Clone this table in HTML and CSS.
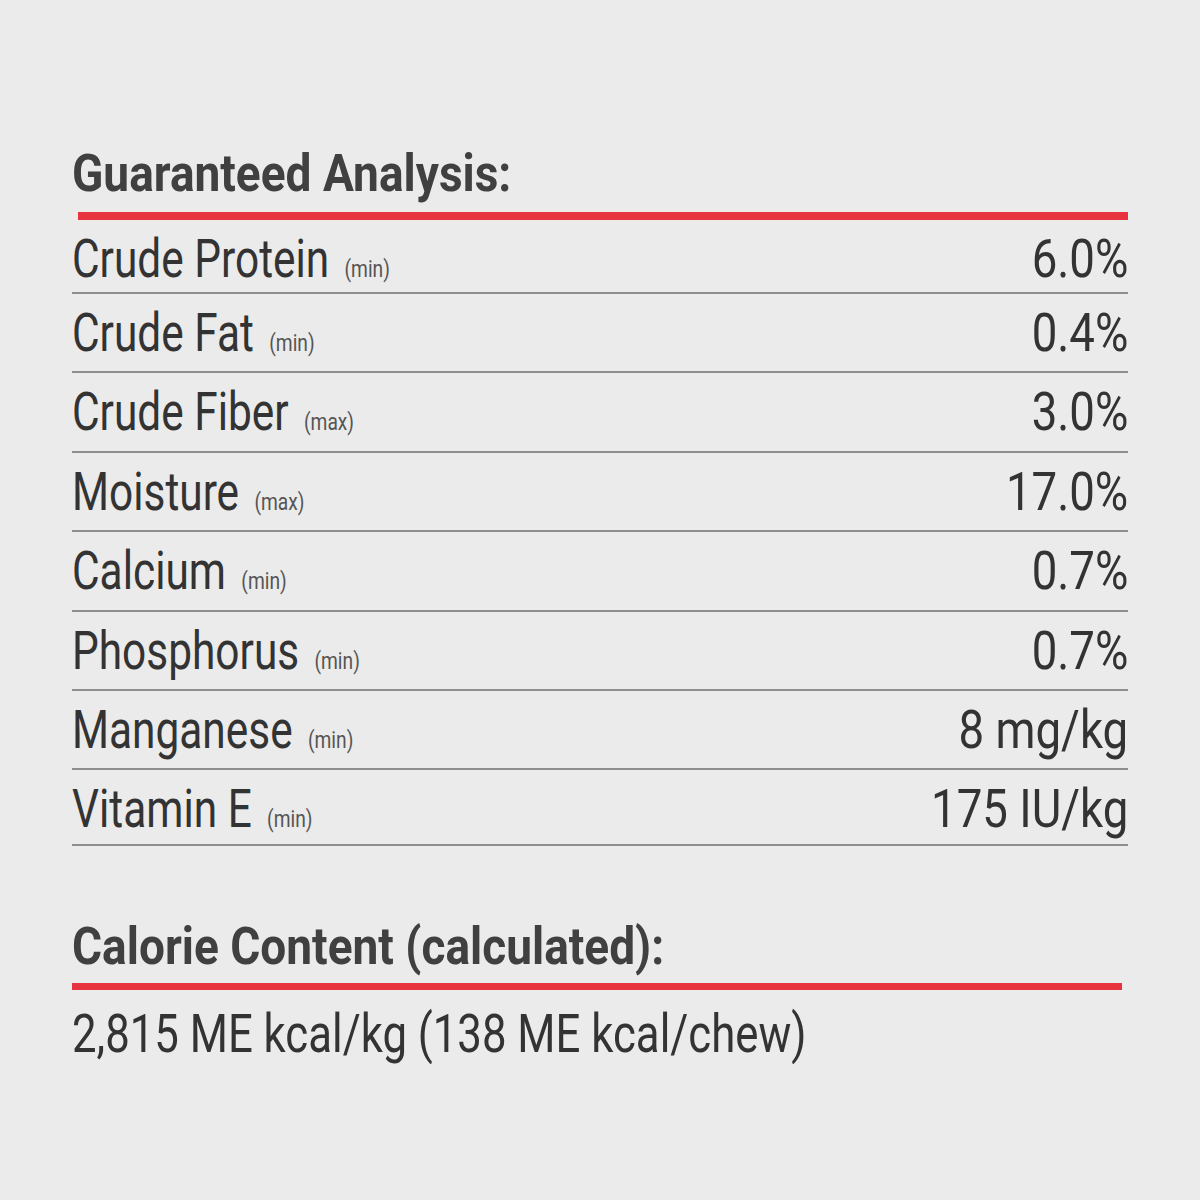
FILE: index.html
```html
<!DOCTYPE html>
<html lang="en">
<head>
<meta charset="utf-8">
<title>Guaranteed Analysis</title>
<link rel="stylesheet" href="styles.css">
</head>
<body>
<main class="sheet">
  <h2 class="heading"><span class="cond-bold">Guaranteed Analysis:</span></h2>
  <div class="rule-red"></div>
  <ul class="rows">
    <li class="row first"><span class="cond label">Crude Protein <small>(min)</small></span><span class="cond value">6.0%</span></li>
    <li class="row"><span class="cond label">Crude Fat <small>(min)</small></span><span class="cond value">0.4%</span></li>
    <li class="row"><span class="cond label">Crude Fiber <small>(max)</small></span><span class="cond value">3.0%</span></li>
    <li class="row"><span class="cond label">Moisture <small>(max)</small></span><span class="cond value">17.0%</span></li>
    <li class="row"><span class="cond label">Calcium <small>(min)</small></span><span class="cond value">0.7%</span></li>
    <li class="row"><span class="cond label">Phosphorus <small>(min)</small></span><span class="cond value">0.7%</span></li>
    <li class="row"><span class="cond label">Manganese <small>(min)</small></span><span class="cond value">8 mg/kg</span></li>
    <li class="row"><span class="cond label">Vitamin E <small>(min)</small></span><span class="cond value">175 IU/kg</span></li>
  </ul>
  <h2 class="heading second"><span class="cond-bold">Calorie Content (calculated):</span></h2>
  <div class="rule-red short"></div>
  <p class="calories"><span class="cond-cal">2,815 ME kcal/kg (138 ME kcal/chew)</span></p>
</main>
</body>
</html>
```

FILE: styles.css
```css
html, body {
  margin: 0;
  padding: 0;
  background: #ebebeb;
  overflow: hidden;
}

body {
  font-family: Roboto, "Liberation Sans", sans-serif;
  color: #333333;
}

.sheet {
  width: 1056px;
  padding: 144px 72px 0 72px;
}

.heading {
  margin: 0 0 8px 0;
  font-size: 52px;
  line-height: 60px;
  font-weight: 700;
  color: #404040;
  white-space: nowrap;
}

.heading.second {
  margin-top: 71px;
  margin-bottom: 6px;
}

.cond-bold {
  display: inline-block;
  transform: scaleX(0.885);
  transform-origin: left center;
}

.rule-red {
  height: 8px;
  margin-left: 6px;
  background: #e7333e;
}

.rule-red.short {
  height: 7px;
  margin-left: 0;
  width: 1050px;
}

.rows {
  list-style: none;
  margin: 0;
  padding: 0;
}

.row {
  box-sizing: border-box;
  height: 79.4px;
  padding-top: 9px;
  display: flex;
  justify-content: space-between;
  align-items: baseline;
  border-bottom: 2px solid #8e8e8e;
  font-size: 53px;
  font-weight: 400;
  line-height: 60px;
  white-space: nowrap;
}

.row.first {
  height: 74px;
}

.row:last-child {
  height: 76px;
}

.cond {
  display: inline-block;
}

.label {
  transform: scaleX(0.8);
  transform-origin: left center;
}

.value {
  transform: scaleX(0.86);
  transform-origin: right center;
}

.label small {
  font-size: 24px;
  font-weight: 400;
  margin-left: 6px;
  color: #555;
}

.calories {
  margin: 14px 0 0 0;
  font-size: 53px;
  font-weight: 400;
  line-height: 60px;
  white-space: nowrap;
}

.cond-cal {
  display: inline-block;
  transform: scaleX(0.825);
  transform-origin: left center;
}
```
